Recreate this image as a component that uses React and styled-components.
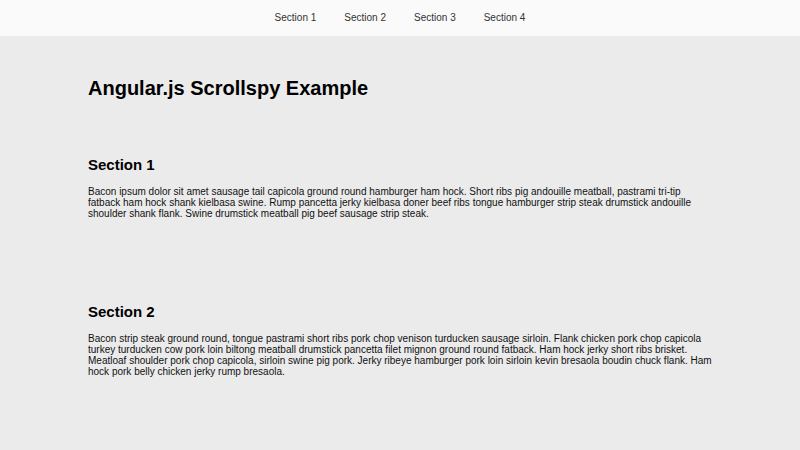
import React from 'react';
import styled, { createGlobalStyle } from 'styled-components';

const GlobalStyle = createGlobalStyle`
  html, body {
    margin: 0;
    padding: 0;
    background: #ebebeb;
    font-family: "Liberation Sans", Arial, sans-serif;
  }
`;

const Page = styled.div`
  min-height: 100vh;
  background: #ebebeb;
`;

const NavBar = styled.nav`
  height: 36px;
  background: #fafafa;
  display: flex;
  justify-content: center;
  align-items: center;
`;

const NavList = styled.ul`
  display: flex;
  gap: 28px;
  list-style: none;
  margin: 0 0 1px 0;
  padding: 0;
  font-size: 10px;
  line-height: 12px;
`;

const NavLink = styled.a`
  font-size: 10px;
  color: ${props => (props.active ? '#000' : '#333')};
  text-decoration: none;
  cursor: pointer;
`;

const Main = styled.main`
  padding: 40px 88px 0;
`;

const Title = styled.h1`
  margin: 0;
  font-size: 20px;
  line-height: 24px;
  font-weight: 700;
  color: #000;
`;

const Section = styled.section`
  box-sizing: border-box;
  min-height: 147px;
  padding-top: 56px;

  h2 {
    margin: 0 0 13px 0;
    font-size: 15px;
    line-height: 17px;
    font-weight: 700;
    color: #000;
  }

  p {
    margin: 0;
    font-size: 10px;
    line-height: 11px;
    color: #111;
  }
`;

const links = ['Section 1', 'Section 2', 'Section 3', 'Section 4'];

const sections = [
  {
    id: 'section1',
    title: 'Section 1',
    text: 'Bacon ipsum dolor sit amet sausage tail capicola ground round hamburger ham hock. Short ribs pig andouille meatball, pastrami tri-tip fatback ham hock shank kielbasa swine. Rump pancetta jerky kielbasa doner beef ribs tongue hamburger strip steak drumstick andouille shoulder shank flank. Swine drumstick meatball pig beef sausage strip steak.',
  },
  {
    id: 'section2',
    title: 'Section 2',
    text: 'Bacon strip steak ground round, tongue pastrami short ribs pork chop venison turducken sausage sirloin. Flank chicken pork chop capicola turkey turducken cow pork loin biltong meatball drumstick pancetta filet mignon ground round fatback. Ham hock jerky short ribs brisket. Meatloaf shoulder pork chop capicola, sirloin swine pig pork. Jerky ribeye hamburger pork loin sirloin kevin bresaola boudin chuck flank. Ham hock pork belly chicken jerky rump bresaola.',
  },
];

const App = () => {
  return (
    <Page>
      <GlobalStyle />
      <NavBar>
        <NavList>
          {links.map((label, i) => (
            <li key={label}>
              <NavLink href={`#section${i + 1}`}>{label}</NavLink>
            </li>
          ))}
        </NavList>
      </NavBar>
      <Main>
        <Title>Angular.js Scrollspy Example</Title>
        {sections.map(s => (
          <Section key={s.id} id={s.id}>
            <h2>{s.title}</h2>
            <p>{s.text}</p>
          </Section>
        ))}
      </Main>
    </Page>
  );
};

export default App;
